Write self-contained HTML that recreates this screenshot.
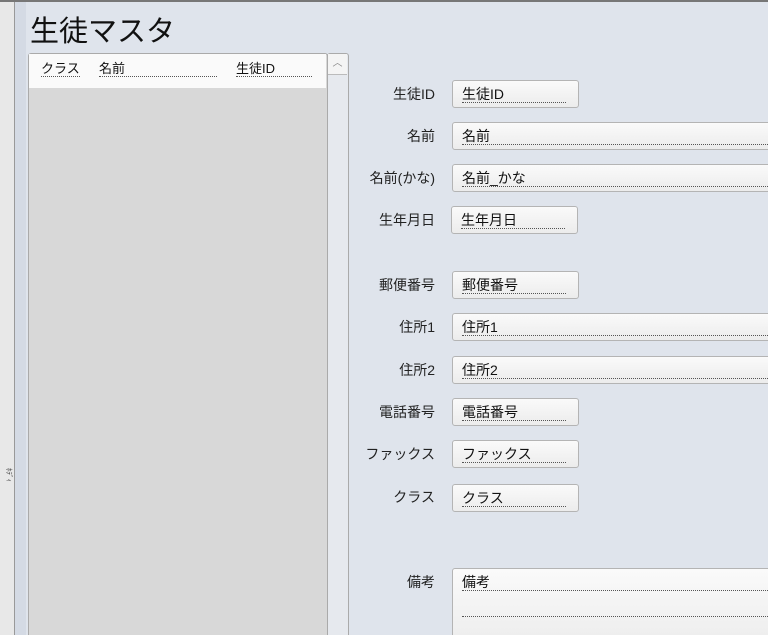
<!DOCTYPE html><html><head><meta charset="utf-8"><style>
html,body{margin:0;width:768px;height:635px;overflow:hidden}
body{background:#dfe4ec;font-family:"Liberation Sans","Noto Sans CJK JP",sans-serif;position:relative}
.a{position:absolute}
.lbl{position:absolute;right:333px;font-size:14px;color:#222;text-align:right;line-height:18px}
.box{position:absolute;left:452px;height:28px;border:1px solid #b4b4b4;border-radius:3px;background:linear-gradient(#fafafa,#ececec);box-sizing:border-box;font-size:14px;color:#111}
.box span{position:absolute;left:9px;top:5px;border-bottom:1px dotted #555;line-height:16px;padding-right:4px}
</style></head><body>
<div class="a" style="left:0;top:0;width:768px;height:2px;background:#777"></div>
<div class="a" style="left:0;top:2px;width:14px;height:633px;background:#e8e8e8"></div>
<div class="a" style="left:14px;top:2px;width:1px;height:633px;background:#999"></div>
<div class="a" style="left:15px;top:2px;width:11px;height:633px;background:#d4dae4"></div>
<div class="a" style="left:3px;top:468px;font-size:7px;color:#333;writing-mode:vertical-rl">ﾎﾃﾞｨ</div>
<div class="a" style="left:30px;top:8px;font-size:29px;color:#111">生徒マスタ</div>
<div class="a" style="left:28px;top:53px;width:298px;height:590px;border:1px solid #aaa;border-radius:3px;background:#d8d8d8"></div>
<div class="a" style="left:29px;top:54px;width:297px;height:34px;background:#fafafa;font-size:13px;color:#111">
<span class="a" style="left:12px;top:8px;border-bottom:1px dotted #555;line-height:14px">クラス</span>
<span class="a" style="left:70px;top:8px;border-bottom:1px dotted #555;line-height:14px;width:118px">名前</span>
<span class="a" style="left:207px;top:8px;border-bottom:1px dotted #555;line-height:14px;width:76px">生徒ID</span>
</div>
<div class="a" style="left:327px;top:53px;width:20px;height:590px;border:1px solid #aaa;border-radius:3px;background:#e6e9ee"></div>
<div class="a" style="left:328px;top:54px;width:19px;height:20px;background:#f4f4f4;border-bottom:1px solid #bbb;font-size:10px;color:#888;text-align:center;line-height:20px">︿</div>

<div class="lbl" style="top:85px">生徒ID</div><div class="box" style="top:80px;width:127px"><span style="width:100px">生徒ID</span></div>
<div class="lbl" style="top:127px">名前</div><div class="box" style="top:122px;width:330px"><span style="width:310px">名前</span></div>
<div class="lbl" style="top:169px">名前(かな)</div><div class="box" style="top:164px;width:330px"><span style="width:310px">名前_かな</span></div>
<div class="lbl" style="top:211px">生年月日</div><div class="box" style="top:206px;width:127px;left:451px"><span style="width:100px">生年月日</span></div>
<div class="lbl" style="top:276px">郵便番号</div><div class="box" style="top:271px;width:127px"><span style="width:100px">郵便番号</span></div>
<div class="lbl" style="top:318px">住所1</div><div class="box" style="top:313px;width:330px"><span style="width:310px">住所1</span></div>
<div class="lbl" style="top:361px">住所2</div><div class="box" style="top:356px;width:330px"><span style="width:310px">住所2</span></div>
<div class="lbl" style="top:403px">電話番号</div><div class="box" style="top:398px;width:127px"><span style="width:100px">電話番号</span></div>
<div class="lbl" style="top:445px">ファックス</div><div class="box" style="top:440px;width:127px"><span style="width:100px">ファックス</span></div>
<div class="lbl" style="top:488px">クラス</div><div class="box" style="top:484px;width:127px"><span style="width:100px">クラス</span></div>
<div class="lbl" style="top:573px">備考</div><div class="box" style="top:568px;width:330px;height:80px"><span style="width:310px">備考</span><span style="top:31px;width:310px">&nbsp;</span></div>
</body></html>
